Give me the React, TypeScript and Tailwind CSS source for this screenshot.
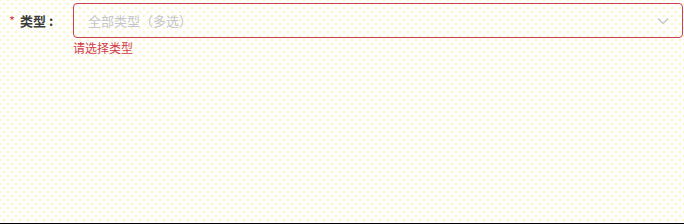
import React from "react";

export default function App() {
  return (
    <div
      className="w-[684px] h-[224px] border-b border-black bg-[#fdfdff] [background-image:radial-gradient(circle,#fff48a_0.6px,transparent_0.9px),radial-gradient(circle,#fff48a_0.6px,transparent_0.9px)] [background-size:8px_8px] [background-position:0_0,4px_4px] font-['Noto_Sans_CJK_SC',sans-serif]"
    >
      <div className="flex pt-[3px]">
        <div className="w-[73px] h-[35px] flex items-center pl-[9px] text-[13px] font-bold text-[#3b3b3b]">
          <span className="text-[#d9434f] mr-[5px] font-normal">*</span>
          <span>类型</span>
          <span className="ml-[3px]">:</span>
        </div>
        <div className="flex-1 flex flex-col">
          <div className="h-[35px] w-[610px] border border-[#c9404f] rounded-[4px] flex items-center justify-between pl-[14px] pr-[13px]">
            <span className="text-[13px] text-[#c3c6cc]">全部类型（多选）</span>
            <svg width="12" height="8" viewBox="0 0 12 8" className="mt-[1px]">
              <path d="M1 1.5 L6 6.5 L11 1.5" fill="none" stroke="#bfc3cb" strokeWidth="1.2" />
            </svg>
          </div>
          <div className="text-[12px] leading-[18px] mt-[1px] text-[#d23a4a]">请选择类型</div>
        </div>
      </div>
    </div>
  );
}
